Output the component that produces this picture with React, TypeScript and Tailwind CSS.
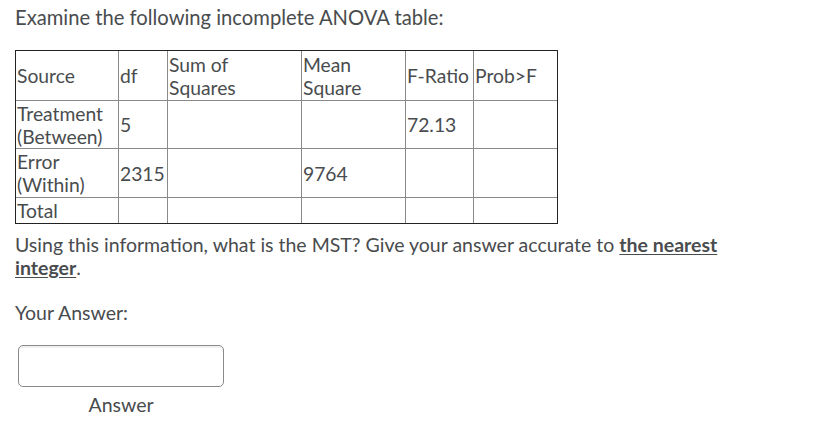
import React from "react";

const widths = ["w-[103px]", "w-[49px]", "w-[134px]", "w-[104px]", "w-[68px]", "w-[83px]"];

const rows: string[][] = [
  ["Source", "df", "Sum of\nSquares", "Mean\nSquare", "F-Ratio", "Prob>F"],
  ["Treatment\n(Between)", "5", "", "", "72.13", ""],
  ["Error\n(Within)", "2315", "", "9764", "", ""],
  ["Total", "", "", "", "", ""],
];

const rowH = ["h-[50px]", "h-[48px]", "h-[49px]", "h-[25px]"];

export default function App() {
  return (
    <div
      className="w-[816px] h-[433px] bg-white text-[#494c4e] text-[19.5px] leading-[23px] overflow-hidden"
      style={{ fontFamily: "Lato, 'Open Sans', sans-serif" }}
    >
      <div className="pl-[15px] pt-[6px]">
        <p className="text-[20.2px]">Examine the following incomplete ANOVA table:</p>
        <table className="mt-[21px] table-fixed border-separate border-spacing-0 border border-[#222] text-[19.3px] leading-[23px]">
          <tbody>
            {rows.map((r, ri) => (
              <tr key={ri} className={rowH[ri]}>
                {r.map((c, ci) => (
                  <td
                    key={ci}
                    className={
                      widths[ci] +
                      " p-0 pl-px align-middle whitespace-pre-line border-[#8a8a8a] " +
                      (ci < 5 ? "border-r " : "") +
                      (ri < 3 ? "border-b" : "")
                    }
                  >
                    {c}
                  </td>
                ))}
              </tr>
            ))}
          </tbody>
        </table>
        <p className="mt-[9px] w-[745px]">
          Using this information, what is the MST? Give your answer accurate to{" "}
          <span className="font-bold underline underline-offset-2">the nearest integer</span>.
        </p>
        <p className="mt-[22px]">Your Answer:</p>
        <div className="mt-[21px] ml-[3px] w-[206px] flex flex-col items-center">
          <div className="w-[206px] h-[42px] rounded-[5px] border border-[#8a8a8a] bg-white shadow-[inset_0_2px_0_#f1f1f1]" />
          <div className="mt-[6px]">Answer</div>
        </div>
      </div>
    </div>
  );
}
